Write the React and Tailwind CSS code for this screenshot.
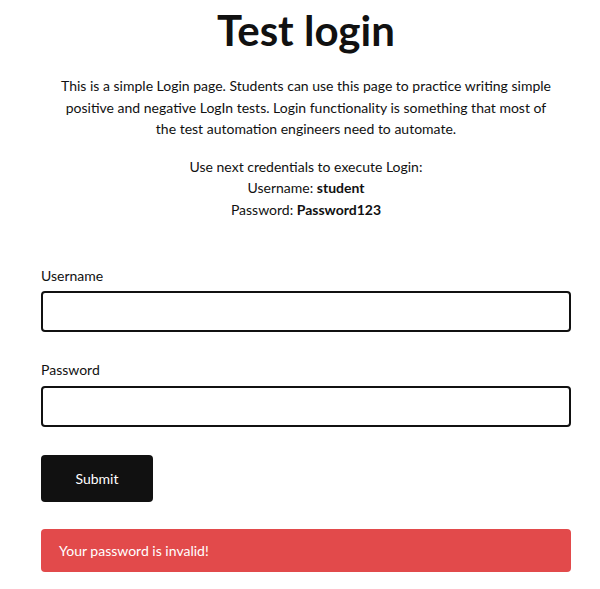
import React from "react";

export default function App() {
  return (
    <div className="min-h-[589px] bg-white font-['Lato','Open_Sans',sans-serif] text-[#111]">
      <div className="ml-[41px] w-[530px] pt-[5px]">
        <h1 className="text-center text-[42px] font-bold leading-[1.2]">Test login</h1>
        <p className="mt-[20px] px-[18px] text-center text-[14px] leading-[21.5px]">
          This is a simple Login page. Students can use this page to practice writing simple positive and negative LogIn
          tests. Login functionality is something that most of the test automation engineers need to automate.
        </p>
        <p className="mt-[16px] text-center text-[14px] leading-[21.5px]">
          Use next credentials to execute Login:
          <br />
          Username: <b>student</b>
          <br />
          Password: <b>Password123</b>
        </p>

        <form className="mt-[45px]" onSubmit={(e) => e.preventDefault()}>
          <label className="block text-[14px] leading-[22px]" htmlFor="username">Username</label>
          <input id="username" className="mt-[4px] block h-[41px] w-full rounded-[4px] border-2 border-[#111]" />
          <label className="mt-[27px] block text-[14px] leading-[22px]" htmlFor="password">Password</label>
          <input id="password" type="password" className="mt-[5px] block h-[41px] w-full rounded-[4px] border-2 border-[#111]" />
          <button className="mt-[28px] h-[47px] w-[112px] rounded-[4px] bg-[#111] text-[14px] text-white">Submit</button>
        </form>

        <div className="mt-[27px] rounded-[4px] bg-[#e24a4b] px-[18px] py-[10.5px] text-[14px] leading-[22px] text-white">
          Your password is invalid!
        </div>
      </div>
    </div>
  );
}
